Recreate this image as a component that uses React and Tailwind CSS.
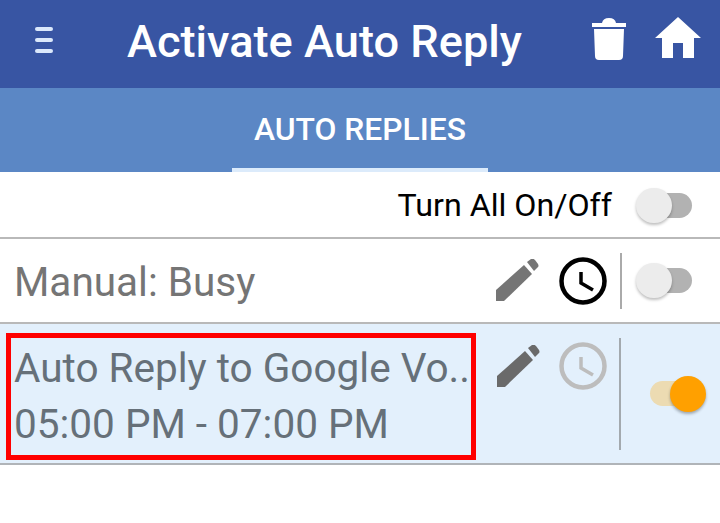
const font = { fontFamily: "Roboto, sans-serif" };

function Toggle({ on }) {
  return on ? (
    <div className="relative h-[25px] w-[56px]">
      <div className="absolute left-0 top-0 h-[25px] w-[40px] rounded-full bg-[#ecdbb2]" />
      <div className="absolute left-[20px] top-[-5px] h-[36px] w-[36px] rounded-full bg-[#ffa000] shadow-[0_2px_3px_rgba(0,0,0,0.3)]" />
    </div>
  ) : (
    <div className="relative h-[25px] w-[56px]">
      <div className="absolute right-0 top-0 h-[25px] w-[40px] rounded-full bg-[#b2b2b2]" />
      <div className="absolute left-0 top-[-5px] h-[35px] w-[36px] rounded-full bg-[#ececec] shadow-[0_2px_3px_rgba(0,0,0,0.25)]" />
    </div>
  );
}

function Pencil({ color }) {
  return (
    <svg width="44" height="44" viewBox="0 0 44 44" className="block">
      <path d="M1 31 L29 6 L37 15 L9 42 L1 42 Z" fill={color} />
      <path d="M32 3 L36 0 Q38 -1 40 1 L43 5 Q44 7 43 8 L39 12 Z" fill={color} />
    </svg>
  );
}

function Clock({ color }) {
  return (
    <svg width="48" height="48" viewBox="0 0 48 48" className="block">
      <circle cx="24" cy="24" r="21.5" fill="none" stroke={color} strokeWidth="4.5" />
      <path d="M22 15 V26 L34 33" fill="none" stroke={color} strokeWidth="3.5" />
    </svg>
  );
}

export default function App() {
  return (
    <div className="h-[523px] w-[720px] overflow-hidden bg-white" style={font}>
      <header className="flex h-[88px] items-center bg-[#3855a3] text-white">
        <div className="ml-[35px] mb-[8px] flex h-[26px] w-[18px] flex-col justify-between">
          <span className="h-[4px] rounded-sm bg-[#dbe8fb]" />
          <span className="h-[4px] rounded-sm bg-[#dbe8fb]" />
          <span className="h-[4px] rounded-sm bg-[#dbe8fb]" />
        </div>
        <h1 className="mb-[4px] ml-[74px] whitespace-nowrap text-[45.2px] font-medium leading-none">Activate Auto Reply</h1>
        <svg width="34" height="44" viewBox="0 0 34 44" className="mb-[10px] ml-[70px] block">
          <path d="M0 6 H10 Q11 1 17 1 Q23 1 24 6 H34 V10 H0 Z" fill="white" />
          <path d="M2 12 H32 L31 39 Q31 43 27 43 H7 Q3 43 3 39 Z" fill="white" />
        </svg>
        <svg width="46" height="42" viewBox="0 0 46 42" className="mb-[12px] ml-[29px] block">
          <path d="M23 0 L46 21 H39 V41 H28 V26 H18 V41 H7 V21 H0 Z" fill="white" />
        </svg>
      </header>

      <nav className="flex h-[84px] justify-center bg-[#5b87c5]">
        <div className="flex w-[256px] items-center justify-center border-b-[4px] border-[#dcebfb] pt-[3px] text-[31.8px] font-medium text-white">
          AUTO REPLIES
        </div>
      </nav>

      <div className="flex h-[67px] items-center justify-end border-b-2 border-[#b9b9b9] pr-[28px] text-black">
        <span className="mr-[24px] pt-[2px] text-[32.2px] leading-none">Turn All On/Off</span>
        <div className="pt-[1px]"><Toggle /></div>
      </div>

      <div className="flex h-[85px] items-center border-b-2 border-[#b9b9b9] pl-[14px] text-[#757575]">
        <span className="flex-1 pt-[3px] text-[40.5px] leading-none">Manual: Busy</span>
        <div className="mr-[20px]"><Pencil color="#757575" /></div>
        <div className="mr-[13px]"><Clock color="#000000" /></div>
        <div className="mr-[14px] h-[56px] w-[2px] bg-[#aaaaaa]" />
        <div className="mr-[28px]"><Toggle /></div>
      </div>

      <div className="flex h-[141px] items-start border-b-2 border-[#b0b4b8] bg-[#e3f0fc]">
        <div className="ml-[6px] mt-[9px] h-[127px] w-[470px] border-[5px] border-[#ff0000] pl-[3px] pt-[2px] text-[40.5px] leading-[56px] text-[#667079]">
          <div className="whitespace-nowrap">Auto Reply to Google Vo..</div>
          <div className="whitespace-nowrap">05:00 PM - 07:00 PM</div>
        </div>
        <div className="ml-[20px] mt-[21px]"><Pencil color="#6a6a6a" /></div>
        <div className="ml-[19px] mt-[18px]"><Clock color="#bdbdbd" /></div>
        <div className="ml-[12px] mt-[14px] h-[112px] w-[2px] bg-[#a3a9ae]" />
        <div className="ml-[29px] mt-[57px]"><Toggle on /></div>
      </div>
    </div>
  );
}
